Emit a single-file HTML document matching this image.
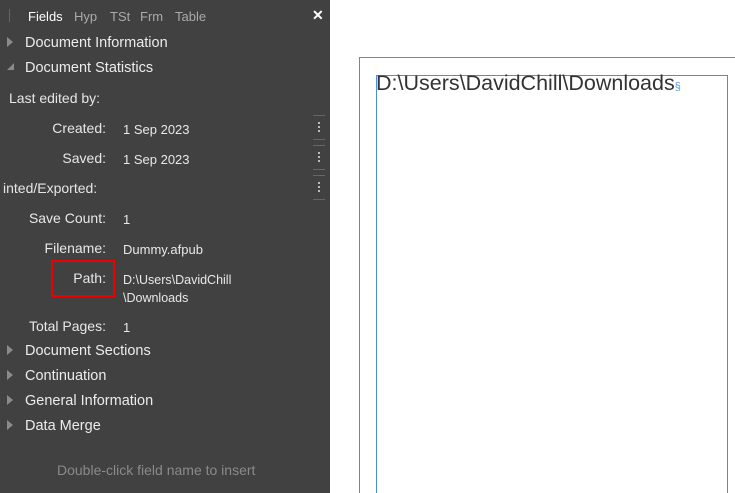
<!DOCTYPE html>
<html style="overflow:hidden;width:735px;height:493px"><head><meta charset="utf-8"><style>
body{margin:0;width:735px;height:493px;overflow:hidden;background:#fff;font-family:"Liberation Sans",sans-serif;position:relative}
#p{position:absolute;left:0;top:0;width:330px;height:493px;background:#414141;color:#e6e6e6}
.a{position:absolute;white-space:nowrap}
.l{position:absolute;right:224px;font-size:14px;color:#e8e8e8;white-space:nowrap}
.v{position:absolute;left:123px;font-size:13px;color:#e8e8e8;white-space:nowrap}
.h{position:absolute;left:25px;font-size:14.5px;color:#ececec}
.t{position:absolute;left:7px;width:0;height:0;border-left:6px solid #8a8a8a;border-top:5px solid transparent;border-bottom:5px solid transparent}
.k{position:absolute;left:318px;width:2px;font-size:0}
.k i{display:block;width:2px;height:2px;background:#bbb;margin:2px 0}
.s{position:absolute;left:313px;width:12px;height:1px;background:#666}
</style></head><body>
<div id="p">
<div class="a" style="left:9px;top:9px;width:1px;height:13px;background:#666"></div>
<div class="a" style="left:28px;top:9px;font-size:13px;color:#fff">Fields</div>
<div class="a" style="left:74px;top:9px;font-size:13px;color:#aaa">Hyp</div>
<div class="a" style="left:110px;top:9px;font-size:13px;color:#aaa">TSt</div>
<div class="a" style="left:140px;top:9px;font-size:13px;color:#aaa">Frm</div>
<div class="a" style="left:175px;top:9px;font-size:13px;color:#aaa">Table</div>
<div class="a" style="left:312px;top:7px;font-size:14px;color:#fff;font-weight:bold">✕</div>
<div class="t" style="top:37px"></div><div class="h" style="top:35px">Document Information</div>
<div class="a" style="left:7px;top:63px;width:0;height:0;border-right:7px solid #8a8a8a;border-top:7px solid transparent"></div>
<div class="h" style="top:60px">Document Statistics</div>
<div class="a" style="left:9px;top:90px;font-size:14px">Last edited by:</div>
<div class="l" style="top:120px">Created:</div><div class="v" style="top:122px">1 Sep 2023</div>
<div class="l" style="top:150px">Saved:</div><div class="v" style="top:152px">1 Sep 2023</div>
<div class="a" style="left:3px;top:180px;font-size:14px">inted/Exported:</div>
<div class="l" style="top:210px">Save Count:</div><div class="v" style="top:212px">1</div>
<div class="l" style="top:240px">Filename:</div><div class="v" style="top:242px">Dummy.afpub</div>
<div class="l" style="top:270px">Path:</div><div class="v" style="top:271px;font-size:12.5px;line-height:18px">D:\Users\DavidChill<br>\Downloads</div>
<div class="a" style="left:51px;top:260px;width:60px;height:33px;border:2px solid #e00"></div>
<div class="l" style="top:318px">Total Pages:</div><div class="v" style="top:320px">1</div>
<div class="s" style="top:115px"></div><div class="k" style="top:120px"><i></i><i></i><i></i></div><div class="s" style="top:139px"></div>
<div class="s" style="top:145px"></div><div class="k" style="top:150px"><i></i><i></i><i></i></div><div class="s" style="top:169px"></div>
<div class="s" style="top:175px"></div><div class="k" style="top:180px"><i></i><i></i><i></i></div><div class="s" style="top:199px"></div>
<div class="t" style="top:345px"></div><div class="h" style="top:343px">Document Sections</div>
<div class="t" style="top:370px"></div><div class="h" style="top:368px">Continuation</div>
<div class="t" style="top:395px"></div><div class="h" style="top:393px">General Information</div>
<div class="t" style="top:420px"></div><div class="h" style="top:418px">Data Merge</div>
<div class="a" style="left:57px;top:462px;font-size:14px;color:#8a8a8a">Double-click field name to insert</div>
</div>
<div class="a" style="left:359px;top:57px;width:380px;height:436px;border:1px solid #4a8fd8;border-bottom:0;border-right:0"></div>
<div class="a" style="left:376px;top:75px;width:350px;height:418px;border:1px solid #4a8fd8;border-bottom:0"></div>
<div class="a" style="left:376px;top:71px;font-size:21.5px;color:#333">D:\Users\DavidChill\Downloads<span style="font-size:11px;color:#5a9be0">§</span></div>
</body></html>
